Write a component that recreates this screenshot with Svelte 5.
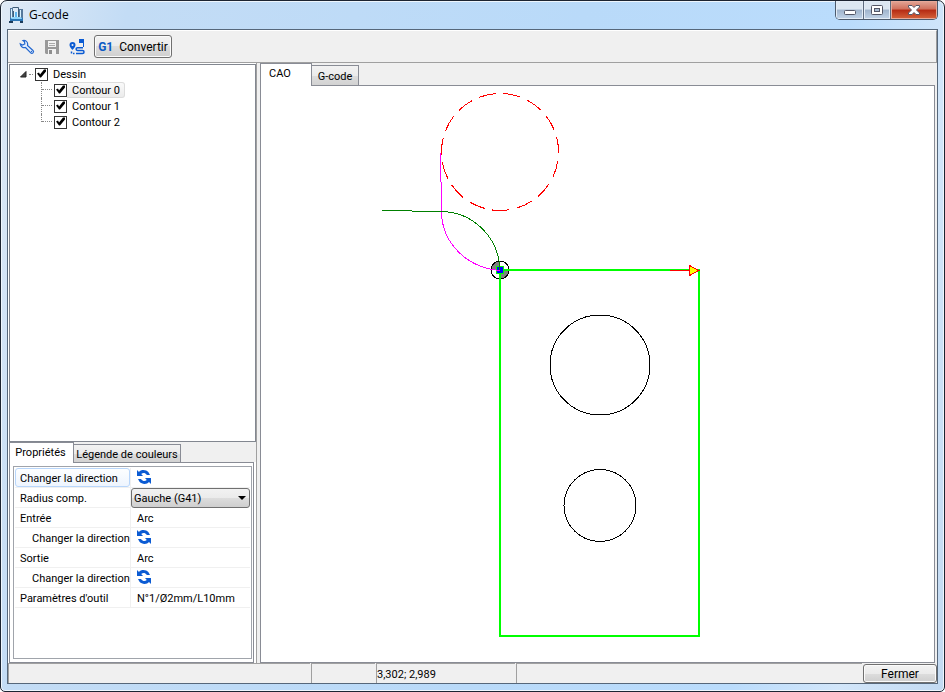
<script>
  let dessin = $state(true);
  let contours = $state([
    { name: 'Contour 0', checked: true },
    { name: 'Contour 1', checked: true },
    { name: 'Contour 2', checked: true }
  ]);
  let active = $state(0);
  let radius = $state('Gauche (G41)');
</script>

{#snippet refresh()}
  <button class="refresh" type="button" aria-label="Changer la direction">
    <svg width="14" height="14" viewBox="0 0 14 14" aria-hidden="true">
      <path fill="#0b5bd3" d="M0 0 2 2C4-.6 9-.6 11.500 2.200L13 5H10C8 2.400 6 2.400 4.200 4L6 6H0Z" />
      <path fill="#0b5bd3" d="M14 14 12 12C10 14.600 5 14.600 2.500 11.800L1 9H4C6 11.600 8 11.600 9.800 10L8 8H14Z" />
    </svg>
  </button>
{/snippet}

<div class="window">
  <header class="titlebar">
    <svg class="logo" width="15" height="17" viewBox="0 0 15 17" aria-hidden="true">
      <path fill="#56799c" d="M1 1h3v12H1zM10 2h4v12h-4z" />
      <path fill="#d9f1ff" d="M2 2h1v9H2zM11 3h1v8h-1zM4 5h6v6H4z" />
      <path fill="none" stroke="#3f5c78" d="M3.500 .500H9.500V4.500M4.500 4V10M9.500 4V10" />
      <path fill="none" stroke="#5fb4ee" d="M7 5V12" stroke-width="2" />
      <path fill="#2a75b5" d="M1 11h13v3H1z" />
      <path fill="#8fd4fa" d="M3 10h9l1 2H2z" />
      <path fill="#1c3c5c" d="M0 14h4v2H0zM11 14h3v2h-3z" />
    </svg>
    <h1>G-code</h1>
    <div class="caption">
      <button type="button" aria-label="Réduire">
        <svg width="14" height="12" viewBox="0 0 14 12"><rect x="1.500" y="6.500" width="11" height="4" rx="1" fill="#fff" stroke="#535666" /></svg>
      </button>
      <button type="button" aria-label="Agrandir">
        <svg width="14" height="12" viewBox="0 0 14 12">
          <rect x="1.500" y="1.500" width="11" height="9" rx="1" fill="#fff" stroke="#535666" />
          <rect x="4.500" y="4.500" width="5" height="3" fill="#a9bdd3" stroke="#535666" />
        </svg>
      </button>
      <button type="button" class="close" aria-label="Fermer la fenêtre">
        <svg width="14" height="12" viewBox="0 0 14 12">
          <path d="M1.500 1.500h3.500l2 2 2-2h3.500v1.500l-3 3 3 3v1.500H9l-2-2-2 2H1.500V9l3-3-3-3z" fill="#fff" stroke="#535666" />
        </svg>
      </button>
    </div>
  </header>

  <main class="client">
    <div class="toolbar">
      <button type="button" class="tool" aria-label="Paramètres">
        <svg width="16" height="16" viewBox="0 0 16 16">
          <path fill="#e4eefc" stroke="#2468cf" stroke-width="1.200" d="M4 1.500C6.500 1 8.500 2.500 8.700 5L8.500 6.500 14 11.500a1.600 1.600 0 0 1-2.300 2.300L6.500 8.500C4 9.200 1.500 7.500 1.200 4.800L3.500 6 5.800 5 5.500 2.800Z" />
          <circle cx="12.500" cy="12.500" r=".7" fill="#2468cf" />
        </svg>
      </button>
      <button type="button" class="tool" aria-label="Enregistrer">
        <svg width="16" height="16" viewBox="0 0 16 16">
          <path fill="#999" d="M1 1h14v14H2l-1-1z" />
          <path fill="#f2f2f2" d="M4 2h8v6H4zM4 10h8v5H4z" />
          <path fill="#aaa" d="M5 4h6v1H5zM5 6h6v1H5z" />
          <path fill="#8e8e8e" d="M5 11h3v4H5z" />
        </svg>
      </button>
      <button type="button" class="tool" aria-label="Parcours">
        <svg width="16" height="16" viewBox="0 0 16 16">
          <path fill="#0b5bd3" fill-rule="evenodd" d="M3.500 3a3 3 0 0 1 3 3c0 2-3 5-3 5S.5 8 .5 6a3 3 0 0 1 3-3Zm0 2a1 1 0 1 0 0 2 1 1 0 0 0 0-2Z" />
          <path fill="#0b5bd3" d="M10 0h5v8h-1V4h-4z" />
          <path fill="none" stroke="#0b5bd3" stroke-width="1.500" d="M14 8.700H8.500a1.400 1.400 0 0 0 0 2.800h5a1.500 1.500 0 0 1 0 3H7M2.500 12.500v2M4 14.500h1.500" />
        </svg>
      </button>
      <button type="button" class="btn convert"><b>G1</b>Convertir</button>
    </div>

    <div class="body">
      <section class="side">
        <div class="tree">
          <div class="node root">
            <svg width="7" height="7" viewBox="0 0 7 7" aria-hidden="true"><path d="M6 .5V6H.5Z" fill="#444" stroke="#222" /></svg>
            <i class="dots"></i>
            <label><input type="checkbox" bind:checked={dessin} /><span>Dessin</span></label>
          </div>
          <ul>
            {#each contours as c, i}
              <li class="node" class:active={active === i}>
                <i class="dots"></i>
                <label><input type="checkbox" bind:checked={c.checked} /><span>{c.name}</span></label>
              </li>
            {/each}
          </ul>
        </div>

        <div class="tabs" role="tablist">
          <button type="button" role="tab" aria-selected="true" class="tab props on">Propriétés</button>
          <button type="button" role="tab" aria-selected="false" class="tab legend">Légende de couleurs</button>
        </div>
        <div class="panel">
          <div class="grid">
            <table>
              <tbody>
                <tr class="hot"><th scope="row"><span>Changer la direction</span></th><td class="action">{@render refresh()}</td></tr>
                <tr>
                  <th scope="row"><label for="radius">Radius comp.</label></th>
                  <td class="combo">
                    <select id="radius" bind:value={radius}>
                      <option>Gauche (G41)</option>
                      <option>Droite (G42)</option>
                    </select>
                  </td>
                </tr>
                <tr><th scope="row">Entrée</th><td>Arc</td></tr>
                <tr><th scope="row" class="sub">Changer la direction</th><td class="action">{@render refresh()}</td></tr>
                <tr><th scope="row">Sortie</th><td>Arc</td></tr>
                <tr><th scope="row" class="sub">Changer la direction</th><td class="action">{@render refresh()}</td></tr>
                <tr><th scope="row">Paramètres d'outil</th><td>N°1/Ø2mm/L10mm</td></tr>
              </tbody>
            </table>
          </div>
        </div>
      </section>

      <section class="view">
        <div class="tabs" role="tablist">
          <button type="button" role="tab" aria-selected="true" class="tab cao on">CAO</button>
          <button type="button" role="tab" aria-selected="false" class="tab code">G-code</button>
        </div>
        <div class="canvas">
          <svg viewBox="261 86 673 576" fill="none" shape-rendering="crispEdges" role="img" aria-label="Dessin CAO">
            <circle cx="600" cy="365" r="50" stroke="#000" />
            <circle cx="600" cy="505.500" r="36" stroke="#000" />
            <circle cx="500" cy="152" r="58.500" stroke="#f00" stroke-dasharray="17 7.500" stroke-dashoffset="-9" />
            <circle cx="500" cy="270" r="9.500" fill="#fff" />
            <path fill="#808080" d="M500 270V261a9 9 0 0 0-9 9ZM500 270V279a9 9 0 0 0 9-9Z" />
            <circle cx="500" cy="270" r="9" stroke="#000" />
            <path stroke="#f0f" d="M440.500 153V182M441.500 182V212C442 244 468 268 500 270.500" />
            <path stroke="#008000" d="M382 210.500H412M412 211.500H441C474 212 499 238 500 270" />
            <rect x="500" y="270" width="199" height="366" stroke="#0f0" stroke-width="2" />
            <rect x="496" y="266" width="8" height="8" fill="#0f0" />
            <rect x="497" y="267" width="6" height="6" fill="#00f" />
            <path stroke="#008000" d="M499.500 266V270" />
            <path stroke="#f0f" d="M496 270.500H500" />
            <path stroke="#f00" d="M670 270.500H690" />
            <path fill="#ff0" stroke="#f00" d="M689.500 265.500V275.500L698.500 270.500Z" />
          </svg>
        </div>
      </section>
    </div>

    <footer class="status">
      <div class="s1"></div>
      <div class="s2"></div>
      <div class="s3">3,302; 2,989</div>
      <div class="s4"></div>
      <button type="button" class="btn fermer">Fermer</button>
    </footer>
  </main>
</div>

<style>
  :global(body) { background: #fff; }
  * { box-sizing: border-box; }
  button, select, input { font: inherit; color: inherit; margin: 0; padding: 0; }
  svg { display: block; }

  .window {
    height: 100vh;
    display: flex;
    flex-direction: column;
    padding: 0 6px 7px;
    border: 1px solid #1c2431;
    border-radius: 7px 7px 5px 5px;
    background: linear-gradient(100deg, #dfeaf6 0, #c3dcf5 12%, #b9daf9 55%, #badcfc 80%, #d2e6fa 90%, #c3daf2 100%);
    box-shadow: inset 0 0 0 1px #eef6fd;
    font-family: Roboto, "Noto Sans", sans-serif;
    font-size: 11px;
    line-height: 16px;
    color: #000;
  }

  .titlebar { display: flex; height: 28px; align-items: center; flex: none; }
  .logo { margin-left: 2px; }
  h1 { flex: 1; margin: 0 0 0 5px; font: 12px/16px "Open Sans", "Noto Sans", sans-serif; }
  .caption {
    display: flex;
    align-self: flex-start;
    height: 19px;
    border: 1px solid #4c5a6c;
    border-top: 0;
    border-radius: 0 0 5px 5px;
    overflow: hidden;
  }
  .caption button {
    width: 27px;
    display: grid;
    place-items: center;
    border: 0;
    border-left: 1px solid #5d6b7e;
    background: linear-gradient(#dce7f2 0 45%, #9fb4cc 50%, #c2d4e8);
    box-shadow: inset 0 0 0 1px #e3ecf6;
  }
  .caption button:first-child { border-left: 0; }
  .caption .close {
    width: 47px;
    background: linear-gradient(#e3a798, #d0705c 45%, #b52a13 50%, #d6643b);
    box-shadow: inset 0 0 0 1px #e7a999;
  }

  .client {
    flex: 1;
    min-height: 0;
    display: flex;
    flex-direction: column;
    border: 1px solid #56677a;
    background: #f0f0f0;
  }
  .toolbar {
    flex: none;
    height: 33px;
    display: flex;
    align-items: center;
    gap: 9px;
    padding-left: 11px;
    border-right: 1px solid #9a9a9a;
    border-bottom: 1px solid #a0a0a0;
    border-top: 1px solid #fff;
  }
  .tool { width: 16px; border: 0; background: none; }
  .btn {
    border: 1px solid #707070;
    border-radius: 3px;
    background: linear-gradient(#f2f2f2, #ebebeb 50%, #dddddd 50%, #cfcfcf);
    box-shadow: inset 0 0 0 1px #fbfbfb;
    font-size: 12px;
  }
  .convert { width: 78px; height: 23px; display: flex; align-items: center; justify-content: center; gap: 6px; padding-top: 1px; }
  .convert b { color: #0b5bc4; }

  .body { flex: 1; min-height: 0; display: flex; gap: 3px; }
  .side {
    width: 249px;
    display: flex;
    flex-direction: column;
    padding: 1px 0 0 1px;
    border-right: 1px solid #a0a0a0;
    background: #fff;
  }
  .tree { flex: 1; min-height: 0; padding-top: 1px; border: 1px solid #828790; }
  ul { margin: 0; padding: 0 0 0 31px; list-style: none; }
  .node { display: flex; align-items: center; height: 16px; }
  .root { padding-left: 10px; }
  .root .dots { width: 4px; margin: 0 2px; border-top: 1px dotted #888; }
  li .dots { align-self: stretch; width: 13px; border-left: 1px dotted #888; position: relative; }
  li:last-child .dots { align-self: flex-start; height: 8px; }
  li .dots::after { content: ""; position: absolute; left: 0; top: 7px; width: 10px; border-top: 1px dotted #888; }
  .node label { display: flex; align-items: center; height: 16px; }
  .node label span { height: 16px; padding: 0 4px 0 5px; line-height: 18px; }
  .active label span { border: 1px solid #dcdcdc; border-left: 0; border-radius: 0 3px 3px 0; background: linear-gradient(#fafafa, #ebebeb); line-height: 16px; }
  input[type="checkbox"] { appearance: none; width: 13px; height: 13px; border: 1px solid #333; background: #fff; display: block; }
  input[type="checkbox"]:checked::before {
    content: "";
    display: block;
    width: 11px;
    height: 11px;
    background: #000;
    clip-path: polygon(1px 5px, 3px 4px, 4px 6px, 8px 1px, 10px 1px, 10px 3px, 5px 9px, 4px 9px);
  }

  .tabs { display: flex; align-items: flex-end; flex: none; }
  .side .tabs { height: 20px; background: #f0f0f0; }
  .tab { padding-top: 2px; border: 1px solid #898c95; border-bottom: 0; background: linear-gradient(#f2f2f2, #ebebeb 50%, #dddddd 50%, #d2d2d2); white-space: nowrap; text-align: center; }
  .tab.on { background: #fff; }
  .props { width: 65px; }
  .legend { width: 107px; height: 18px; border-left: 0; }
  .panel { flex: none; height: 201px; width: 245px; padding: 3px 1px 3px 3px; border: 1px solid #898c95; }
  .tabs .on { margin-bottom: -1px; position: relative; z-index: 1; padding: 0 2px 0 0; }
  .side .tabs .on { height: 21px; }
  .grid { height: 100%; padding: 1px; border: 1px solid #a0a4ab; }
  table { width: 100%; border-collapse: separate; border-spacing: 0; table-layout: fixed; }
  th, td { height: 20px; padding: 2px 0 0 5px; border-bottom: 1px solid #f0f0f0; font-weight: normal; text-align: left; white-space: nowrap; line-height: 16px; }
  td { padding-left: 6px; }
  td.action { padding-top: 0; vertical-align: top; }
  td.action .refresh { margin-top: 2px; }
  th { width: 116px; border-right: 1px solid #f0f0f0; }
  th.sub { padding-left: 17px; }
  .hot th { padding: 0; }
  .hot span { display: block; height: 19px; padding-left: 4px; border: 1px solid #b8d6fb; border-radius: 3px; background: linear-gradient(#fdfeff, #eef5fe); line-height: 20px; }
  td.combo { padding: 0; border: 0; position: relative; }
  select { appearance: none; display: block; width: 100%; height: 20px; padding: 2px 2px 0; border: 1px solid #707070; border-radius: 3px; background: linear-gradient(#f2f2f2, #ebebeb 50%, #dddddd 50%, #cfcfcf); line-height: 16px; }
  .combo::after { content: ""; position: absolute; right: 4px; top: 8px; border: 4px solid transparent; border-top-color: #000; border-bottom: 0; pointer-events: none; }
  .refresh { display: block; border: 0; background: none; }

  .view { flex: 1; min-width: 0; display: flex; flex-direction: column; padding-right: 2px; }
  .view .tabs { height: 22px; }
  .view .cao { width: 52px; height: 23px; padding: 0 12px 2px 0; }
  .code { width: 47px; height: 20px; border-left: 0; }
  .canvas { flex: 1; min-height: 0; border: 1px solid #898c95; background: #fff; }
  .canvas svg { width: 100%; height: 100%; }

  .status { flex: none; height: 20px; display: flex; gap: 1px; }
  .status div { border-left: 1px solid #a0a0a0; border-top: 1px solid #a0a0a0; }
  .s1 { width: 302px; }
  .s2 { width: 64px; }
  .s3 { width: 139px; line-height: 21px; }
  .s4 { flex: 1; }
  .fermer { width: 74px; height: 19px; margin-top: 1px; padding-top: 2px; line-height: 15px; }
</style>
